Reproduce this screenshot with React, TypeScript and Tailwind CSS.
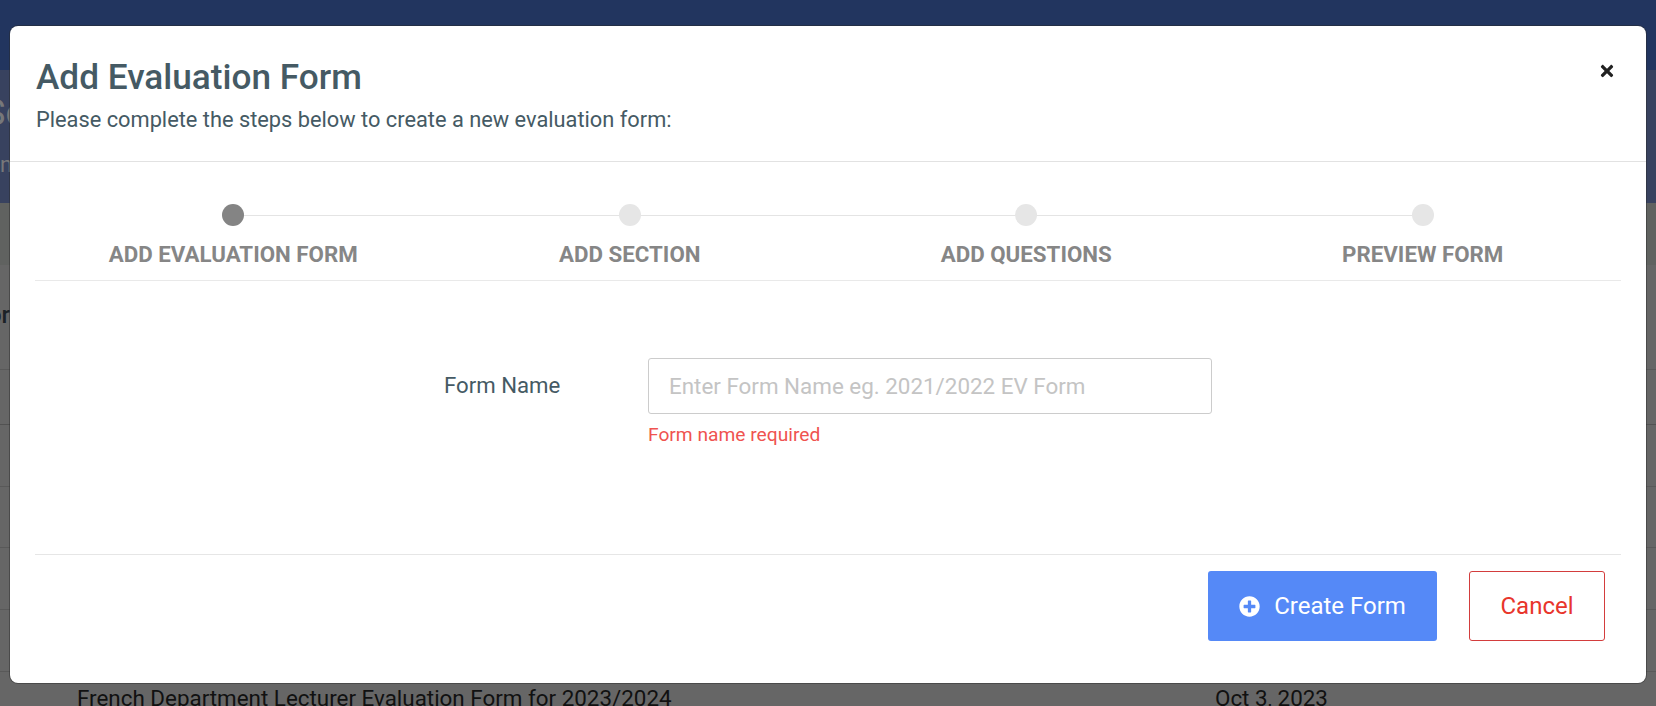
import { FaPlusCircle, FaTimes } from "react-icons/fa";

const steps = ["ADD EVALUATION FORM", "ADD SECTION", "ADD QUESTIONS", "PREVIEW FORM"];

function Backdrop() {
  return (
    <div>
      <div className="h-[70px] bg-[#22355f]" />
      <div className="h-[133px] overflow-hidden bg-[#38425f] text-[#77787a]">
        <div className="-ml-[16px] mt-[15px] text-[36px] leading-[56px]">Sc</div>
        <div className="-ml-[6px] mt-[9px] text-[22px] leading-[30px]">In</div>
      </div>
      <div className="h-[62px] bg-[#606260]" />
      <div className="h-[105px] border-b border-[#595959] pt-[35px]">
        <div className="-ml-[12px] text-[24px] font-medium leading-[30px] text-[#1c2226]">or</div>
      </div>
      <div className="h-[55px] border-b border-[#525252]" />
      <div className="h-[62px] border-b border-[#595959]" />
      <div className="h-[61px] border-b border-[#595959]" />
      <div className="h-[62px] border-b border-[#595959]" />
      <div className="h-[62px] border-b border-[#595959]" />
      <div className="flex pt-[11px] text-[22.4px] leading-[30px] text-[#111]">
        <div className="ml-[77px] w-[1138px]">French Department Lecturer Evaluation Form for 2023/2024</div>
        <div>Oct 3, 2023</div>
      </div>
    </div>
  );
}

function Stepper() {
  return (
    <div className="mx-[25px] grid h-[119px] grid-cols-4 border-b border-[#e9e9e9] pt-[42px]">
      {steps.map((step, i) => (
        <div key={step} className="relative flex flex-col items-center">
          {i < steps.length - 1 && (
            <div className="absolute left-1/2 top-[11px] h-px w-full bg-[#e4e4e4]" />
          )}
          <div
            className={`relative h-[22px] w-[22px] rounded-full ${i === 0 ? "bg-[#848484]" : "bg-[#e6e6e6]"}`}
          />
          <div className="mt-[14px] text-[22.3px] font-bold leading-[28px] text-[#868686]">{step}</div>
        </div>
      ))}
    </div>
  );
}

export default function App() {
  return (
    <div
      className="relative h-[706px] w-[1656px] overflow-hidden bg-[#666666]"
      style={{ fontFamily: "Roboto, sans-serif" }}
    >
      <Backdrop />
      <div className="absolute left-[10px] top-[26px] flex h-[657px] w-[1636px] flex-col rounded-[8px] bg-white shadow-[0_0_0_1px_rgba(40,40,40,0.45)]">
        <div className="relative h-[136px] border-b border-[#e2e2e2] px-[26px] pt-[31px]">
          <h1 className="text-[35.2px] font-medium leading-[40px] text-[#455a64]">Add Evaluation Form</h1>
          <p className="mt-[11px] text-[21.8px] leading-[24px] text-[#455a64]">
            Please complete the steps below to create a new evaluation form:
          </p>
          <FaTimes className="absolute right-[30px] top-[36px] h-[18px] w-[18px] text-[#212121]" />
        </div>
        <Stepper />
        <div className="flex h-[273px] flex-col pl-[434px] pt-[77px]">
          <div className="flex">
            <label className="w-[204px] text-[22.2px] leading-[54px] text-[#455a64]">Form Name</label>
            <div>
              <input
                readOnly
                placeholder="Enter Form Name eg. 2021/2022 EV Form"
                className="h-[56px] w-[564px] rounded-[3px] border border-[#cccccc] px-[20px] text-[22.4px] text-[#455a64] outline-none placeholder:text-[#c4c4c4]"
              />
              <div className="mt-[9px] text-[19.2px] leading-[24px] text-[#ef5350]">Form name required</div>
            </div>
          </div>
        </div>
        <div className="mx-[25px] flex justify-end gap-[32px] border-t border-[#e6e6e6] pr-[16px] pt-[16px]">
          <button className="flex h-[70px] w-[229px] items-center justify-center gap-[14px] rounded-[3px] bg-[#5589f7] text-[24px] text-white">
            <FaPlusCircle className="h-[21px] w-[21px]" />
            Create Form
          </button>
          <button className="h-[70px] w-[136px] rounded-[3px] border border-[#d33d3d] text-[24px] text-[#e8352b]">
            Cancel
          </button>
        </div>
      </div>
    </div>
  );
}
